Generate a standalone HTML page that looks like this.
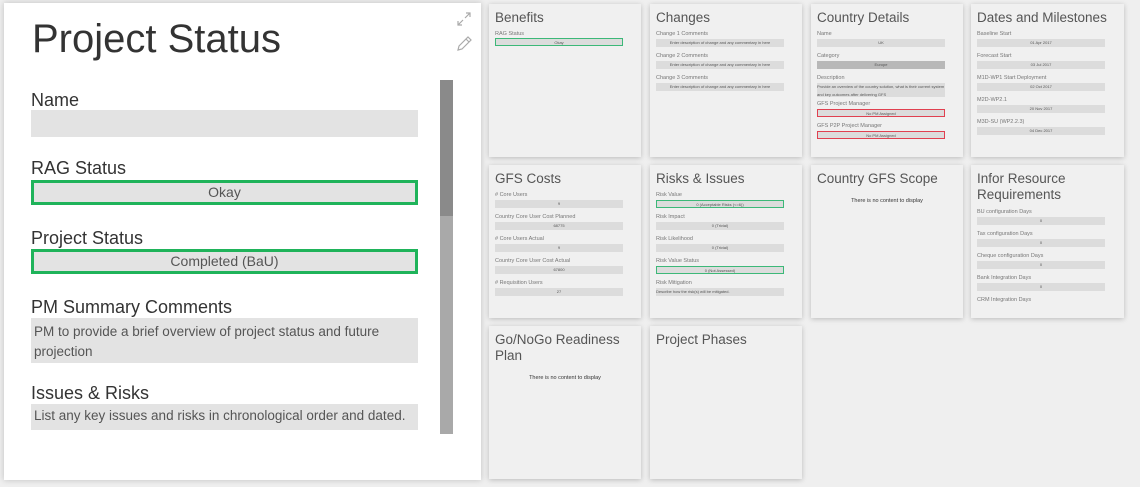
<!DOCTYPE html>
<html><head><style>
body{margin:0;width:1140px;height:487px;background:#efefef;font-family:"Liberation Sans",sans-serif;position:relative;overflow:hidden;color:#444}
.abs{position:absolute}
#panel{left:4px;top:3px;width:477px;height:477px;background:#fff;box-shadow:0 0 6px rgba(0,0,0,.2)}
.lbl{position:absolute;left:31px;font-size:18px;color:#333}
.box{position:absolute;left:31px;width:387px;background:#e3e3e3;box-sizing:border-box;font-size:14px;color:#555}
.g{border:3px solid #1fb35a;text-align:center}
.card{position:absolute;background:#f0f0f0;box-shadow:0 1px 5px rgba(0,0,0,.22);width:152px;height:153px}
.card h3{margin:0;position:absolute;left:6px;top:6px;font-weight:normal;font-size:13.5px;color:#555;line-height:16px}
.s{position:absolute;left:6px;font-size:5.5px;color:#777}
.f{position:absolute;left:6px;width:128px;height:8px;background:#dcdcdc;font-size:4px;color:#555;text-align:center;line-height:8px;box-sizing:border-box}
.fg{border:1px solid #3cb878}
.fr{border:1px solid #e04050}
.nc{position:absolute;left:0;width:100%;text-align:center;font-size:5.5px;color:#333}
</style></head><body>
<div id="panel" class="abs">
<div class="abs" style="left:28px;top:14px;font-size:40px;color:#333">Project Status</div>
<svg class="abs" style="left:452px;top:8px" width="16" height="16" viewBox="0 0 16 16" fill="none" stroke="#aaa" stroke-width="1.2"><path d="M9 7l5-5M10 2h4v4M7 9l-5 5M2 10v4h4"/></svg>
<svg class="abs" style="left:452px;top:33px" width="16" height="16" viewBox="0 0 16 16" fill="none" stroke="#aaa" stroke-width="1.2"><path d="M2 14l1-4 9-9 3 3-9 9zM10 3l3 3"/></svg>
<div class="abs" style="left:436px;top:77px;width:13px;height:354px;background:#a9a9a9"></div>
<div class="abs" style="left:436px;top:77px;width:13px;height:136px;background:#8a8a8a"></div>
<div class="lbl" style="left:27px;top:87px">Name</div>
<div class="box" style="left:27px;top:107px;height:27px"></div>
<div class="lbl" style="left:27px;top:155px">RAG Status</div>
<div class="box g" style="left:27px;top:177px;height:25px;line-height:19px">Okay</div>
<div class="lbl" style="left:27px;top:225px">Project Status</div>
<div class="box g" style="left:27px;top:246px;height:25px;line-height:19px">Completed (BaU)</div>
<div class="lbl" style="left:27px;top:294px">PM Summary Comments</div>
<div class="box" style="left:27px;top:315px;height:45px;padding:4px 3px;line-height:20px;font-size:13.5px">PM to provide a brief overview of project status and future projection</div>
<div class="lbl" style="left:27px;top:380px">Issues &amp; Risks</div>
<div class="box" style="left:27px;top:401px;height:26px;padding:4px 3px;font-size:13.5px">List any key issues and risks in chronological order and dated.</div>
</div>

<div class="card" style="left:489px;top:4px"><h3>Benefits</h3><div class="s" style="top:27px">RAG Status</div><div class="f fg" style="top:34px">Okay</div></div>
<div class="card" style="left:650px;top:4px"><h3>Changes</h3>
<div class="s" style="top:27px">Change 1 Comments</div><div class="f" style="top:35px">Enter description of change and any commentary in here</div>
<div class="s" style="top:49px">Change 2 Comments</div><div class="f" style="top:57px">Enter description of change and any commentary in here</div>
<div class="s" style="top:71px">Change 3 Comments</div><div class="f" style="top:79px">Enter description of change and any commentary in here</div></div>
<div class="card" style="left:811px;top:4px"><h3>Country Details</h3>
<div class="s" style="top:27px">Name</div><div class="f" style="top:35px">UK</div>
<div class="s" style="top:49px">Category</div><div class="f" style="top:57px;background:#b8b8b8">Europe</div>
<div class="s" style="top:71px">Description</div><div class="f" style="top:79px;height:14px;text-align:left">Provide an overview of the country solution, what is their current system and key outcomes after delivering GFS</div>
<div class="s" style="top:97px">GFS Project Manager</div><div class="f fr" style="top:105px">No PM Assigned</div>
<div class="s" style="top:119px">GFS P2P Project Manager</div><div class="f fr" style="top:127px">No PM Assigned</div></div>
<div class="card" style="left:971px;top:4px;width:153px"><h3>Dates and Milestones</h3>
<div class="s" style="top:27px">Baseline Start</div><div class="f" style="top:35px">01 Apr 2017</div>
<div class="s" style="top:49px">Forecast Start</div><div class="f" style="top:57px">03 Jul 2017</div>
<div class="s" style="top:71px">M1D-WP1 Start Deployment</div><div class="f" style="top:79px">02 Oct 2017</div>
<div class="s" style="top:93px">M2D-WP2.1</div><div class="f" style="top:101px">20 Nov 2017</div>
<div class="s" style="top:115px">M3D-SU (WP2.2.3)</div><div class="f" style="top:123px">04 Dec 2017</div></div>

<div class="card" style="left:489px;top:165px"><h3>GFS Costs</h3>
<div class="s" style="top:27px"># Core Users</div><div class="f" style="top:35px">9</div>
<div class="s" style="top:49px">Country Core User Cost Planned</div><div class="f" style="top:57px">68775</div>
<div class="s" style="top:71px"># Core Users Actual</div><div class="f" style="top:79px">9</div>
<div class="s" style="top:93px">Country Core User Cost Actual</div><div class="f" style="top:101px">67800</div>
<div class="s" style="top:115px"># Requisition Users</div><div class="f" style="top:123px">27</div></div>
<div class="card" style="left:650px;top:165px"><h3>Risks &amp; Issues</h3>
<div class="s" style="top:27px">Risk Value</div><div class="f fg" style="top:35px">0 (Acceptable Risks (<=6))</div>
<div class="s" style="top:49px">Risk Impact</div><div class="f" style="top:57px">0 (Trivial)</div>
<div class="s" style="top:71px">Risk Likelihood</div><div class="f" style="top:79px">0 (Trivial)</div>
<div class="s" style="top:93px">Risk Value Status</div><div class="f fg" style="top:101px">0 (Not Assessed)</div>
<div class="s" style="top:115px">Risk Mitigation</div><div class="f" style="top:123px;text-align:left">Describe how the risk(s) will be mitigated.</div></div>
<div class="card" style="left:811px;top:165px"><h3>Country GFS Scope</h3><div class="nc" style="top:33px">There is no content to display</div></div>
<div class="card" style="left:971px;top:165px;width:153px"><h3>Infor Resource<br>Requirements</h3>
<div class="s" style="top:44px">BU configuration Days</div><div class="f" style="top:52px">0</div>
<div class="s" style="top:66px">Tax configuration Days</div><div class="f" style="top:74px">0</div>
<div class="s" style="top:88px">Cheque configuration Days</div><div class="f" style="top:96px">0</div>
<div class="s" style="top:110px">Bank Integration Days</div><div class="f" style="top:118px">0</div>
<div class="s" style="top:132px">CRM Integration Days</div></div>

<div class="card" style="left:489px;top:326px"><h3>Go/NoGo Readiness<br>Plan</h3><div class="nc" style="top:49px">There is no content to display</div></div>
<div class="card" style="left:650px;top:326px"><h3>Project Phases</h3></div>
</body></html>
